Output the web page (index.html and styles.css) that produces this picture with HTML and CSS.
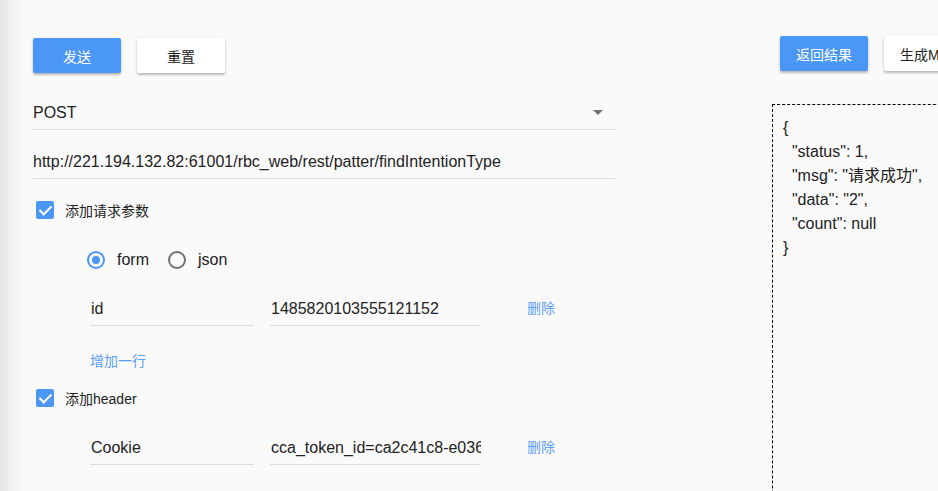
FILE: index.html
```html
<!DOCTYPE html>
<html lang="zh-CN">
<head>
    <meta charset="UTF-8">
    <title>接口测试</title>
    <link rel="stylesheet" href="styles.css">
</head>
<body>

<div class="page">
    <div class="left">
        <div class="actions">
            <button class="btn btn-primary">发送</button>
            <button class="btn">重置</button>
        </div>

        <div class="field select-field">
            <span>POST</span>
            <span class="arrow"></span>
        </div>

        <div class="field url-field">http://221.194.132.82:61001/rbc_web/rest/patter/findIntentionType</div>

        <label class="check-row params-check">
            <span class="checkbox"></span>
            <span>添加请求参数</span>
        </label>

        <div class="radio-row">
            <span class="radio checked"></span>
            <span class="radio-label">form</span>
            <span class="radio"></span>
            <span class="radio-label">json</span>
        </div>

        <div class="kv-row">
            <div class="field key">id</div>
            <div class="field value">1485820103555121152</div>
            <a class="link del">删除</a>
        </div>

        <a class="link add-row">增加一行</a>

        <label class="check-row header-check">
            <span class="checkbox"></span>
            <span>添加header</span>
        </label>

        <div class="kv-row header-row">
            <div class="field key">Cookie</div>
            <div class="field value">cca_token_id=ca2c41c8-e036</div>
            <a class="link del">删除</a>
        </div>
    </div>

    <div class="right">
        <div class="actions right-actions">
            <button class="btn btn-primary">返回结果</button>
            <button class="btn btn-auto">生成Markdown</button>
        </div>
        <pre class="result">{
  "status": 1,
  "msg": "请求成功",
  "data": "2",
  "count": null
}</pre>
    </div>
</div>

</body>
</html>
```

FILE: styles.css
```css
html, body {
    margin: 0;
    padding: 0;
    height: 100%;
    overflow: hidden;
}

body {
    font-family: 'Liberation Sans', 'Noto Sans CJK SC', sans-serif;
    color: #222;
    background: linear-gradient(to right, #e4e4e4 0, #f2f2f2 12px, #fafafa 28px);
}

.page {
    display: flex;
    padding: 36px 0 0 33px;
    width: 1200px;
}

.left {
    width: 582px;
    padding-top: 2px;
}

.right {
    margin-left: 157px;
}

.actions {
    display: flex;
    gap: 16px;
}

.btn {
    width: 88px;
    height: 35px;
    border: none;
    border-radius: 2px;
    background: #fff;
    color: #222;
    font-family: inherit;
    font-size: 14px;
    box-shadow: 0 2px 2px rgba(0, 0, 0, 0.2), 0 1px 4px rgba(0, 0, 0, 0.1);
    cursor: pointer;
    flex: none;
}

.btn-primary {
    background: #4b97f7;
    color: #fff;
}

.btn-auto {
    width: auto;
    padding: 0 16px;
}

.right-actions {
    padding-left: 8px;
}

/* text fields, underline only */
.field {
    height: 33px;
    line-height: 33px;
    border-bottom: 1px solid #dcdcdc;
    font-size: 16px;
    white-space: nowrap;
    overflow: hidden;
}

.select-field {
    margin-top: 23px;
    display: flex;
    justify-content: space-between;
    align-items: center;
    padding-right: 12px;
}

.arrow {
    width: 0;
    height: 0;
    border-left: 5px solid transparent;
    border-right: 5px solid transparent;
    border-top: 5px solid #737373;
}

.url-field {
    margin-top: 15px;
}

.check-row {
    display: flex;
    align-items: center;
    gap: 11px;
    font-size: 14px;
    padding-left: 3px;
    height: 18px;
}

.params-check {
    margin-top: 22px;
}

.header-check {
    margin-top: 19px;
}

.checkbox {
    width: 18px;
    height: 18px;
    border-radius: 2px;
    background: #4b97f7;
    position: relative;
}

/* tick mark */
.checkbox::after {
    content: '';
    position: absolute;
    left: 6px;
    top: 2px;
    width: 5px;
    height: 10px;
    border-right: 2px solid #fff;
    border-bottom: 2px solid #fff;
    transform: rotate(45deg);
}

.radio-row {
    display: flex;
    align-items: center;
    margin-top: 32px;
    padding-left: 54px;
    height: 18px;
    font-size: 16px;
}

.radio {
    width: 14px;
    height: 14px;
    border: 2px solid #737373;
    border-radius: 50%;
    position: relative;
}

.radio.checked {
    border-color: #4b97f7;
}

.radio.checked::after {
    content: '';
    position: absolute;
    left: 3px;
    top: 3px;
    width: 8px;
    height: 8px;
    border-radius: 50%;
    background: #4b97f7;
}

.radio-label {
    margin-left: 12px;
    margin-right: 19px;
}

.kv-row {
    display: flex;
    align-items: center;
    margin-top: 23px;
    padding-left: 57px;
}

.header-row {
    margin-top: 24px;
}

.key {
    width: 163px;
    padding-left: 1px;
}

.value {
    width: 210px;
    margin-left: 16px;
    padding-left: 1px;
}

.link {
    color: #5a9ef5;
    font-size: 14px;
    cursor: pointer;
}

.del {
    margin-left: 46px;
    margin-top: -5px;
}

.add-row {
    display: block;
    margin: 26px 0 0 57px;
    line-height: 18px;
}

.result {
    margin: 33px 0 0;
    width: 400px;
    height: 500px;
    box-sizing: border-box;
    border: 1px dashed #000;
    padding: 11px 10px;
    font-family: 'Liberation Sans', 'Noto Sans CJK SC', sans-serif;
    font-size: 16px;
    line-height: 24px;
    color: #222;
}
```
